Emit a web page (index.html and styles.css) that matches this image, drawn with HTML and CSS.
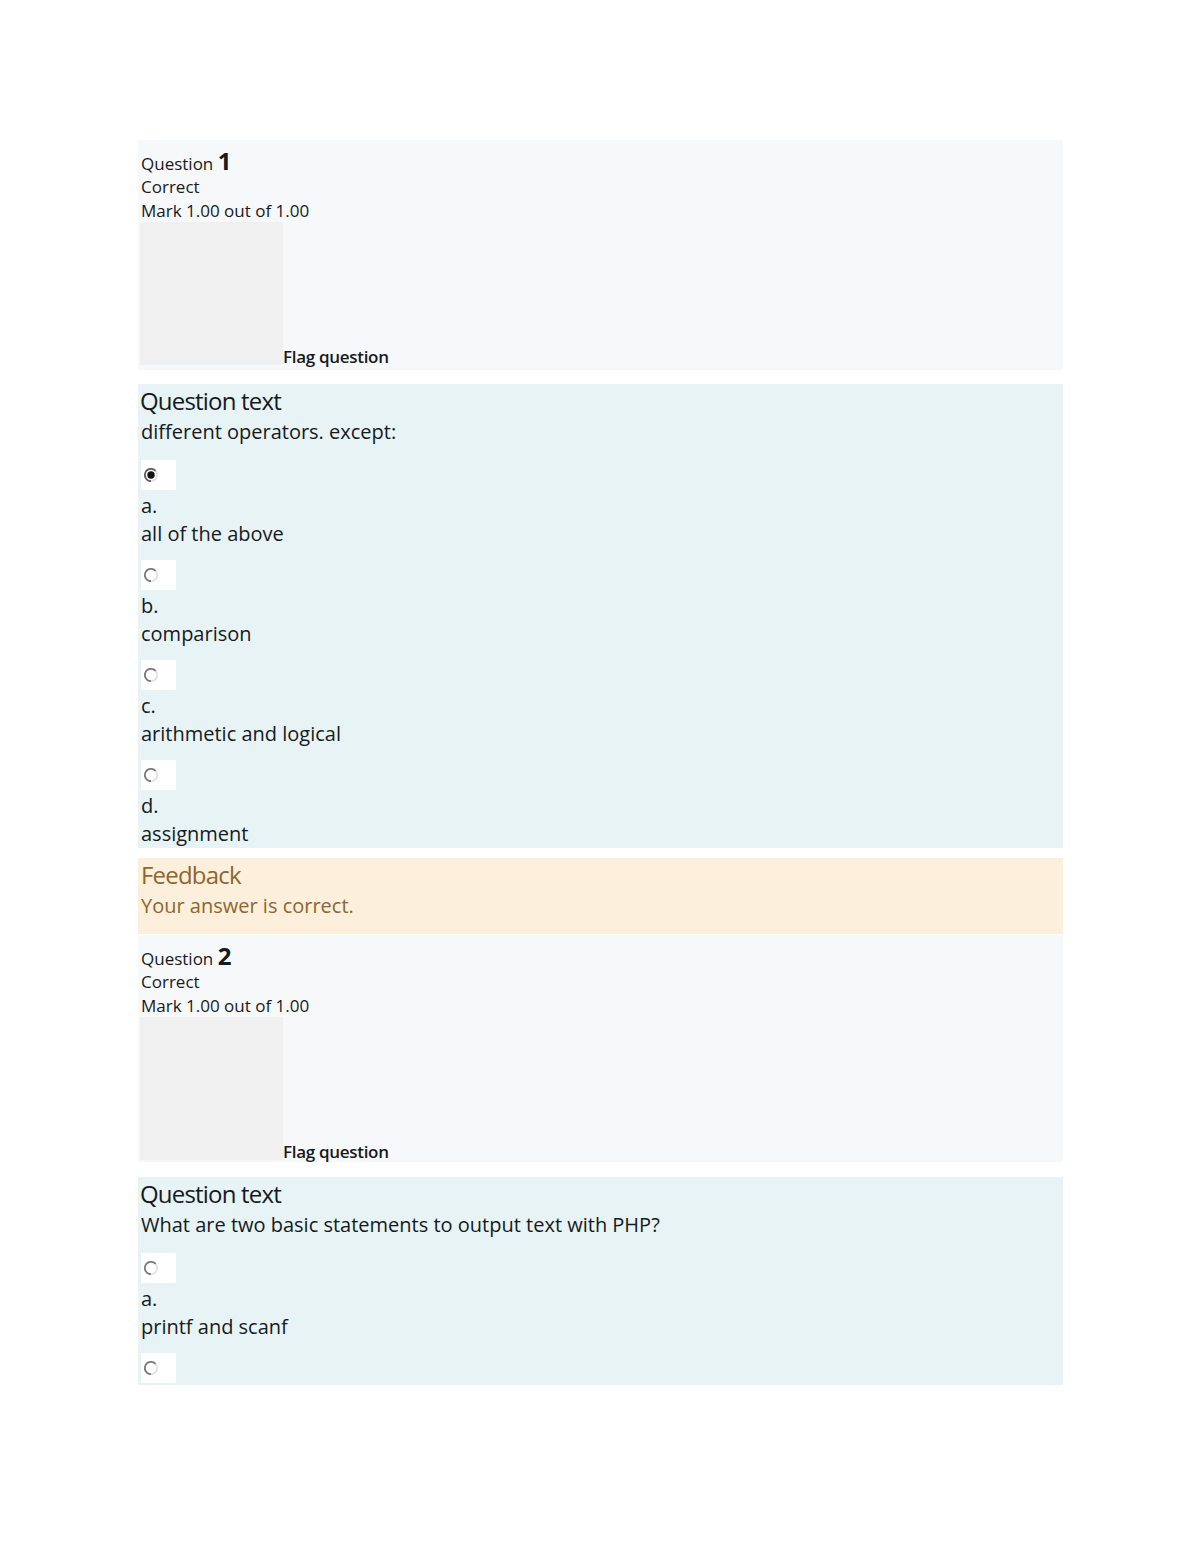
FILE: index.html
```html
<!DOCTYPE html>
<html>
<head>
<meta charset="utf-8">
<link rel="stylesheet" href="styles.css">
</head>
<body>
<div class="page">
  <div class="info">
    <div class="qno">Question <span class="num">1</span></div>
    <div class="state">Correct</div>
    <div class="grade">Mark 1.00 out of 1.00</div>
    <div class="flagrow"><span class="flagbox"></span><span class="flag">Flag question</span></div>
  </div>
  <div class="content">
    <div class="qhead">Question text</div>
    <div class="qtext">different operators. except:</div>
    <div class="opt">
      <div class="radio"><svg width="18" height="18" viewBox="0 0 18 18"><circle cx="8" cy="9" r="6.2" fill="#fff" stroke="#dcdcdc" stroke-width="1.5"/><path d="M12.6 4.8 A6.2 6.2 0 1 0 8 15.2" fill="none" stroke="#5e5e5e" stroke-width="1.7"/><circle cx="8" cy="9" r="3.7" fill="#111"/></svg></div>
      <div class="lbl">a.</div>
      <div class="ans">all of the above</div>
    </div>
    <div class="opt">
      <div class="radio"><svg width="18" height="18" viewBox="0 0 18 18"><circle cx="8" cy="9" r="6.2" fill="#fff" stroke="#dedede" stroke-width="1.5"/><path d="M12.6 4.8 A6.2 6.2 0 1 0 8 15.2" fill="none" stroke="#7a7a7a" stroke-width="1.7"/></svg></div>
      <div class="lbl">b.</div>
      <div class="ans">comparison</div>
    </div>
    <div class="opt">
      <div class="radio"><svg width="18" height="18" viewBox="0 0 18 18"><circle cx="8" cy="9" r="6.2" fill="#fff" stroke="#dedede" stroke-width="1.5"/><path d="M12.6 4.8 A6.2 6.2 0 1 0 8 15.2" fill="none" stroke="#7a7a7a" stroke-width="1.7"/></svg></div>
      <div class="lbl">c.</div>
      <div class="ans">arithmetic and logical</div>
    </div>
    <div class="opt">
      <div class="radio"><svg width="18" height="18" viewBox="0 0 18 18"><circle cx="8" cy="9" r="6.2" fill="#fff" stroke="#dedede" stroke-width="1.5"/><path d="M12.6 4.8 A6.2 6.2 0 1 0 8 15.2" fill="none" stroke="#7a7a7a" stroke-width="1.7"/></svg></div>
      <div class="lbl">d.</div>
      <div class="ans">assignment</div>
    </div>
  </div>
  <div class="feedback">
    <div class="fhead">Feedback</div>
    <div class="ftext">Your answer is correct.</div>
  </div>
  <div class="info info2">
    <div class="qno">Question <span class="num">2</span></div>
    <div class="state">Correct</div>
    <div class="grade">Mark 1.00 out of 1.00</div>
    <div class="flagrow"><span class="flagbox"></span><span class="flag">Flag question</span></div>
  </div>
  <div class="content content2">
    <div class="qhead">Question text</div>
    <div class="qtext">What are two basic statements to output text with PHP?</div>
    <div class="opt">
      <div class="radio"><svg width="18" height="18" viewBox="0 0 18 18"><circle cx="8" cy="9" r="6.2" fill="#fff" stroke="#dedede" stroke-width="1.5"/><path d="M12.6 4.8 A6.2 6.2 0 1 0 8 15.2" fill="none" stroke="#7a7a7a" stroke-width="1.7"/></svg></div>
      <div class="lbl">a.</div>
      <div class="ans">printf and scanf</div>
    </div>
    <div class="opt">
      <div class="radio"><svg width="18" height="18" viewBox="0 0 18 18"><circle cx="8" cy="9" r="6.2" fill="#fff" stroke="#dedede" stroke-width="1.5"/><path d="M12.6 4.8 A6.2 6.2 0 1 0 8 15.2" fill="none" stroke="#7a7a7a" stroke-width="1.7"/></svg></div>
    </div>
  </div>
</div>
</body>
</html>
```

FILE: styles.css
```css
html, body {
  margin: 0;
  padding: 0;
  background: #ffffff;
}
body {
  font-family: "Open Sans", "Noto Sans", sans-serif;
  color: #161a1d;
}
.page {
  width: 925px;
  margin-left: 138px;
  padding-top: 140px;
}
.info {
  background: #f7f8fa;
  padding: 0 3px 5px 3px;
  font-size: 17px;
}
.qno {
  height: 35px;
  line-height: 42px;
}
.num {
  font-size: 24px;
  font-weight: 700;
}
.state {
  line-height: 24px;
}
.grade {
  line-height: 23px;
}
.flagrow {
  height: 143px;
  display: flex;
  align-items: flex-end;
}
.flagbox {
  display: block;
  width: 143px;
  height: 143px;
  background: #f0f0f0;
  margin-left: -1px;
}
.flag {
  font-weight: 600;
  line-height: 20px;
  margin-bottom: -2px;
  letter-spacing: -0.3px;
}
.content {
  margin-top: 14px;
  background: #e7f3f5;
  padding: 0 3px 0 3px;
  font-size: 20px;
}
.qhead {
  font-size: 24px;
  line-height: 34px;
  margin-left: -1px;
  letter-spacing: -0.8px;
}
.qtext {
  line-height: 28px;
  padding-bottom: 2px;
}
.opt {
  margin-top: 12px;
}
.radio {
  width: 35px;
  height: 30px;
  background: #ffffff;
  display: flex;
  align-items: center;
  padding-left: 2px;
  box-sizing: border-box;
}
.lbl {
  margin-top: 2px;
  line-height: 28px;
}
.ans {
  line-height: 28px;
}
.feedback {
  margin-top: 10px;
  background: #fcefdc;
  color: #8e662e;
  padding: 0 3px 14px 3px;
  font-size: 20px;
}
.fhead {
  font-size: 24px;
  line-height: 34px;
  letter-spacing: -0.8px;
}
.ftext {
  line-height: 28px;
}
.info2 {
  margin-top: 1px;
  padding-bottom: 2px;
}
.content2 {
  margin-top: 15px;
  padding-bottom: 2px;
}
```
